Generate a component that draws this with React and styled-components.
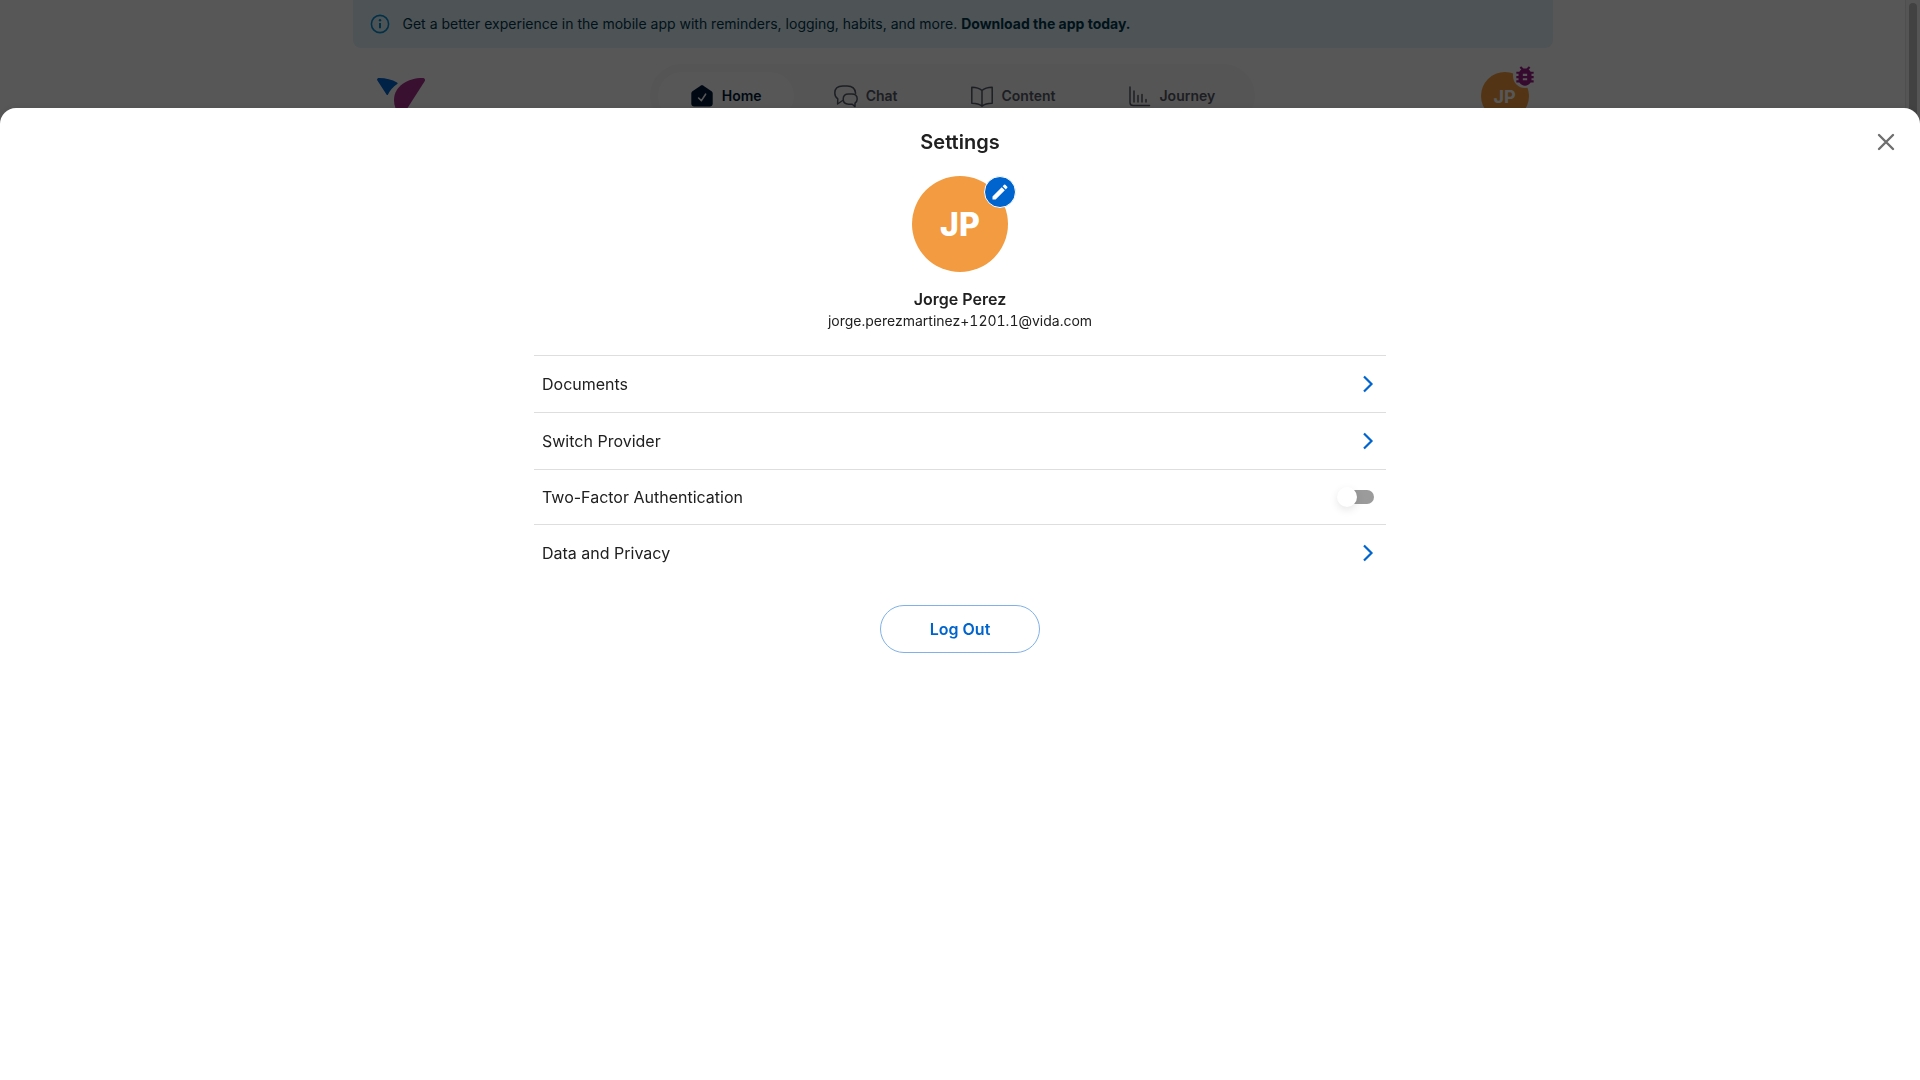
import React, { useState } from 'react'
import styled, { createGlobalStyle } from 'styled-components'

const rows = [
  { label: 'Documents' },
  { label: 'Switch Provider' },
  { label: 'Two-Factor Authentication', toggle: true },
  { label: 'Data and Privacy' },
]

function HomeIcon() {
  return (
    <svg width="24" height="24" viewBox="0 0 24 24">
      <path d="M11 1.400a1.800 1.800 0 0 1 2 0l8.200 5.600c1 .7 1.500 1.500 1.500 2.600v10c0 1.900-1 2.900-2.900 2.900H4.200c-1.900 0-2.900-1-2.900-2.900v-10c0-1.100.5-1.900 1.500-2.600z" fill="#001a38" />
      <path d="M8.600 14l2.800 2.600 4.200-6.400" fill="none" stroke="#fff" strokeWidth="1.600" strokeLinecap="round" strokeLinejoin="round" />
    </svg>
  )
}

function ChatIcon() {
  return (
    <svg width="24" height="24" viewBox="0 0 24 24" fill="none" stroke="currentColor" strokeWidth="1.500" strokeLinecap="round" strokeLinejoin="round">
      <path d="M8.600 16.500L3.600 20l.2-5.200C1.800 13.400.8 11.400.8 9c0-4.500 3-7 8-7h4.400c5 0 8 2.400 8.400 7.200" />
      <path d="M14.600 10h3.300c3.200 0 5.300 2 5.300 5 0 1.800-.8 3.200-2.200 4.200v3.400l-2.700-2.400h-3.700c-3.300 0-5.400-2-5.400-5.100s2.100-5.100 5.400-5.100z" />
    </svg>
  )
}

function ContentIcon() {
  return (
    <svg width="24" height="24" viewBox="0 0 24 24" fill="none" stroke="currentColor" strokeWidth="1.500" strokeLinecap="round" strokeLinejoin="round">
      <path d="M12 6.500v15.700M12 6.500C9.500 4.100 6 3.200 1.800 3.200v16c4.200 0 7.700.8 10.200 3 2.500-2.200 6-3 10.200-3v-16C18 3.200 14.500 4.100 12 6.500z" />
    </svg>
  )
}

function JourneyIcon() {
  return (
    <svg width="24" height="24" viewBox="0 0 24 24" fill="none" stroke="currentColor" strokeWidth="1.500" strokeLinecap="round">
      <path d="M2 3v15.500c0 2 1 3.100 3.200 3.100H21.500M6 7v11M10 11.500V18M14 10.500V18M18 15.500V18" />
    </svg>
  )
}

function Settings({ onClose }) {
  return (
    <Sheet role="dialog" aria-label="Settings">
      <SheetHeader>
        <Title>Settings</Title>
        <CloseButton aria-label="Close" onClick={onClose}>
          <svg width="20" height="20" viewBox="0 0 20 20">
            <path d="M3 3l14 14M17 3L3 17" stroke="#6f6f70" strokeWidth="2.400" strokeLinecap="round" />
          </svg>
        </CloseButton>
      </SheetHeader>

      <Profile>
        <Avatar>
          JP
          <EditButton aria-label="Edit profile">
            <svg width="20" height="20" viewBox="0 0 24 24" fill="#fff">
              <path d="M3 17.250V21h3.750L17.810 9.940l-3.750-3.750L3 17.250zM20.710 7.040a1 1 0 0 0 0-1.410l-2.340-2.340a1 1 0 0 0-1.410 0l-1.830 1.830 3.750 3.750 1.830-1.830z" />
            </svg>
          </EditButton>
        </Avatar>
        <Name>Jorge Perez</Name>
        <Email>jorge.perezmartinez+1201.1@vida.com</Email>
      </Profile>

      <List>
        {rows.map((row) => (
          <li key={row.label}>
            {row.toggle ? (
              <ToggleRow>
                {row.label}
                <Switch type="checkbox" role="switch" />
              </ToggleRow>
            ) : (
              <LinkRow href="#">
                {row.label}
                <svg width="12" height="20" viewBox="0 0 12 20">
                  <path d="M2 2.500L9.500 10 2 17.500" fill="none" stroke="#0064cf" strokeWidth="2.200" />
                </svg>
              </LinkRow>
            )}
          </li>
        ))}
      </List>

      <LogOut>Log Out</LogOut>
    </Sheet>
  )
}

function App() {
  const [open, setOpen] = useState(true)

  return (
    <>
      <GlobalStyle />
      <Page>
        <Content>
          <Banner>
            <svg width="20" height="20" viewBox="0 0 20 20" fill="none" stroke="#058fd6" strokeWidth="1.600">
              <circle cx="10" cy="10" r="8.600" />
              <path d="M10 9v5.200" strokeWidth="2" />
              <circle cx="10" cy="6.200" r="1.200" fill="#058fd6" stroke="none" />
            </svg>
            <p>
              Get a better experience in the mobile app with reminders, logging, habits, and more.{' '}
              <a href="#">Download the app today.</a>
            </p>
          </Banner>

          <Header>
            <Logo href="#" aria-label="Vida">
              <svg width="48" height="48" viewBox="0 0 48 48">
                <path d="M2 0C9 0 15 1.500 20 4.600c.8.5.8 1 .2 1.500C16 9 13 12.500 11 16.400c-.4.800-1 .800-1.500 0L.4 2.600C-.4 1.300.4 0 2 0z" fill="#0063cc" />
                <path d="M45.500 0C31 0 17 8 17 22c0 6 2 10 5 14 2 2 4 1 5-.5L47.500 3.500C48.700 1.500 47.700 0 45.500 0z" fill="#aa2f8e" />
              </svg>
            </Logo>

            <Nav>
              <NavItem href="#" $active><HomeIcon />Home</NavItem>
              <NavItem href="#"><ChatIcon />Chat</NavItem>
              <NavItem href="#"><ContentIcon />Content</NavItem>
              <NavItem href="#"><JourneyIcon />Journey</NavItem>
            </Nav>

            <Account aria-label="Account" onClick={() => setOpen(true)}>
              JP
              <Bug>
                <svg width="26" height="26" viewBox="0 0 24 24" fill="#9e1f8b">
                  <path d="M20 8h-2.810a6 6 0 0 0-1.820-1.960L17 4.410 15.590 3l-2.170 2.170a6 6 0 0 0-2.830 0L8.410 3 7 4.410l1.620 1.630A6 6 0 0 0 6.810 8H4v2h2.090c-.05.330-.09.660-.09 1v1H4v2h2v1c0 .340.04.670.09 1H4v2h2.810a6 6 0 0 0 10.380 0H20v-2h-2.090c.05-.330.09-.660.09-1v-1h2v-2h-2v-1c0-.340-.04-.670-.09-1H20V8zm-6 8h-4v-2h4v2zm0-4h-4v-2h4v2z" />
                </svg>
              </Bug>
            </Account>
          </Header>
        </Content>
        <ScrollTrack>
          <ScrollThumb />
        </ScrollTrack>
      </Page>

      {open && (
        <Overlay>
          <Settings onClose={() => setOpen(false)} />
        </Overlay>
      )}
    </>
  )
}

export default App

const GlobalStyle = createGlobalStyle`
  * {
    box-sizing: border-box;
  }

  body {
    margin: 0;
    font-family: Inter, sans-serif;
    color: #202020;
    overflow: hidden;
  }

  a {
    color: inherit;
    text-decoration: none;
  }

  button {
    padding: 0;
    border: 0;
    background: none;
    font-family: inherit;
    cursor: pointer;
  }

  svg {
    display: block;
    flex-shrink: 0;
  }
`

const Page = styled.div`
  display: flex;
  height: 100vh;
  background: #fff;
`

const Content = styled.div`
  flex: 1;
`

const Banner = styled.div`
  display: flex;
  align-items: center;
  gap: 13px;
  max-width: 1200px;
  height: 48px;
  margin: 0 auto;
  padding: 0 17px;
  border-radius: 0 0 8px 8px;
  background: #e3f4fb;
  color: #003a50;

  p {
    margin: 0;
    font-size: 14px;
    line-height: 16px;
  }

  a {
    font-weight: 700;
  }
`

const Header = styled.header`
  display: grid;
  grid-template-columns: 1fr auto 1fr;
  align-items: center;
  max-width: 1200px;
  margin: 16px auto 0;
  padding: 0 24px;
`

const Logo = styled.a`
  margin-top: 12px;
`

const Nav = styled.nav`
  display: flex;
  gap: 8px;
  padding: 8px;
  border-radius: 32px;
  background: #f9f9f9;
`

const NavItem = styled.a`
  display: flex;
  align-items: center;
  gap: 8px;
  height: 48px;
  padding: 0 32px;
  border-radius: 24px;
  background: ${props => props.$active ? '#fff' : 'transparent'};
  color: ${props => props.$active ? '#001a38' : '#565a68'};
  font-size: 14px;
  font-weight: 600;
  line-height: 16px;
`

const Account = styled.button`
  position: relative;
  justify-self: end;
  width: 48px;
  height: 48px;
  border-radius: 50%;
  background: #f29b40;
  color: #fff;
  font-size: 18px;
  font-weight: 700;
`

const Bug = styled.span`
  position: absolute;
  top: -8px;
  right: -8px;
  display: flex;
  align-items: center;
  justify-content: center;
  width: 24px;
  height: 24px;
  border-radius: 50%;
  background: #fff;
`

const ScrollTrack = styled.div`
  width: 15px;
  padding: 3px 3px 0;
  border-left: 1px solid #e8e8e8;
  background: #fafafa;
`

const ScrollThumb = styled.div`
  width: 8px;
  height: 50%;
  border-radius: 4px;
  background: #c1c1c1;
`

const Overlay = styled.div`
  position: fixed;
  inset: 0;
  display: flex;
  padding-top: 108px;
  background: rgba(0, 0, 0, 0.66);
`

const Sheet = styled.section`
  display: flex;
  flex-direction: column;
  align-items: center;
  flex: 1;
  border-radius: 16px 16px 0 0;
  background: #fff;
  box-shadow: 0 0 8px rgba(0, 0, 0, 0.1);
`

const SheetHeader = styled.header`
  display: grid;
  grid-template-columns: 1fr auto 1fr;
  align-items: center;
  align-self: stretch;
  height: 68px;
  padding: 0 24px;
`

const Title = styled.h1`
  grid-column: 2;
  margin: 0;
  font-size: 20px;
  font-weight: 600;
`

const CloseButton = styled.button`
  justify-self: end;
`

const Profile = styled.div`
  display: flex;
  flex-direction: column;
  align-items: center;
`

const Avatar = styled.div`
  position: relative;
  display: flex;
  align-items: center;
  justify-content: center;
  width: 96px;
  height: 96px;
  border-radius: 50%;
  background: #f29b40;
  color: #fff;
  font-size: 32px;
  font-weight: 800;
`

const EditButton = styled.button`
  position: absolute;
  top: 0;
  right: -8px;
  display: flex;
  align-items: center;
  justify-content: center;
  width: 32px;
  height: 32px;
  border: 1px solid #fff;
  border-radius: 50%;
  background: #0064cf;
`

const Name = styled.h2`
  margin: 16px 0 0;
  font-size: 16px;
  font-weight: 600;
  line-height: 22px;
`

const Email = styled.p`
  margin: 0;
  font-size: 14px;
  line-height: 21px;
  font-variant-numeric: tabular-nums;
`

const List = styled.ul`
  width: 100%;
  max-width: 852px;
  margin: 24px 0 0;
  padding: 0;
  list-style: none;

  li {
    border-top: 1px solid #dedede;
  }
`

const LinkRow = styled.a`
  display: flex;
  align-items: center;
  justify-content: space-between;
  height: 56px;
  padding: 0 12px 0 8px;
  font-size: 16px;
`

const ToggleRow = styled.label`
  display: flex;
  align-items: center;
  justify-content: space-between;
  height: 54px;
  padding: 0 12px 0 8px;
  font-size: 16px;
`

const Switch = styled.input`
  appearance: none;
  position: relative;
  width: 34px;
  height: 14px;
  margin: 0;
  border-radius: 7px;
  background: #9b9b9b;
  cursor: pointer;

  &::before {
    content: '';
    position: absolute;
    top: -3px;
    left: -3px;
    width: 20px;
    height: 20px;
    border-radius: 50%;
    background: #fff;
    box-shadow: 0 3px 8px rgba(0, 0, 0, 0.1);
  }

  &:checked {
    background: #80b1e7;
  }

  &:checked::before {
    left: 17px;
    background: #0064cf;
  }
`

const LogOut = styled.button`
  width: 160px;
  height: 48px;
  margin-top: 24px;
  border: 1px solid #80b1e7;
  border-radius: 24px;
  color: #0064cf;
  font-size: 16px;
  font-weight: 600;
`
